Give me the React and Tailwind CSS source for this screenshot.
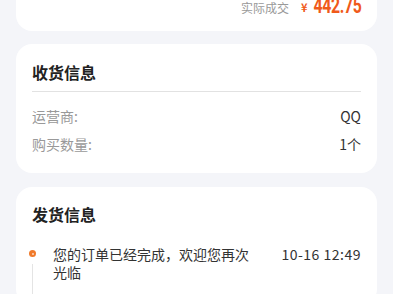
export default function App() {
  return (
    <div
      className="min-h-[294px] bg-[#f4f5f9] px-4 overflow-hidden"
      style={{ fontFamily: '"Noto Sans CJK SC", "Noto Sans", sans-serif' }}
    >
      {/* Price card (scrolled, top cut off) */}
      <div className="bg-white rounded-b-2xl -mt-[11px] px-4 pb-[9px]">
        <div className="h-[33px] flex items-baseline justify-end">
          <span className="text-[12px] text-[#999] mr-[12px]">实际成交</span>
          <span className="text-[11px] font-bold text-[#f05a1a] mr-[5px] relative top-[-1px]">¥</span>
          <span
            className="inline-block text-[22px] leading-[33px] font-bold text-[#f05a1a] tracking-[-0.5px] origin-right scale-x-[0.72] -ml-[18px]"
            style={{ fontFamily: 'Roboto, sans-serif' }}
          >
            442.75
          </span>
        </div>
      </div>

      {/* 收货信息 */}
      <div className="bg-white rounded-2xl mt-[13px] px-4 pt-4 pb-[19px]">
        <h2 className="text-[16px] leading-6 font-bold text-[#222]">收货信息</h2>
        <div className="mt-[7px] border-t border-[#e2e2e2]" />
        <div className="mt-[14px] flex flex-col gap-2">
          <InfoRow label="运营商:" value="QQ" />
          <InfoRow label="购买数量:" value="1个" />
        </div>
      </div>

      {/* 发货信息 */}
      <div className="bg-white rounded-2xl mt-[14px] px-4 pt-[15px] pb-6">
        <h2 className="text-[16px] leading-6 font-bold text-[#222]">发货信息</h2>
        <div className="mt-[19px] relative flex">
          <div className="w-[21px] shrink-0 relative">
            <div className="absolute left-[-3px] top-[5px] w-[7px] h-[7px] rounded-full bg-[#f07a2a] flex items-center justify-center">
              <div className="w-[2px] h-[2px] rounded-full bg-[#ffd9bf]" />
            </div>
            <div className="absolute left-0 top-[19px] w-px h-[60px] bg-[#e4e4e4]" />
          </div>
          <p className="w-[200px] text-[14px] leading-[18px] text-[#333]">您的订单已经完成，欢迎您再次光临</p>
          <span className="ml-auto text-[14px] leading-[18px] text-[#333] tracking-[0.5px]">10-16 12:49</span>
        </div>
      </div>
    </div>
  );
}

function InfoRow({ label, value }) {
  return (
    <div className="flex items-center justify-between h-5">
      <span className="text-[14px] text-[#999]">{label}</span>
      <span className="text-[14px] text-[#333]">{value}</span>
    </div>
  );
}
